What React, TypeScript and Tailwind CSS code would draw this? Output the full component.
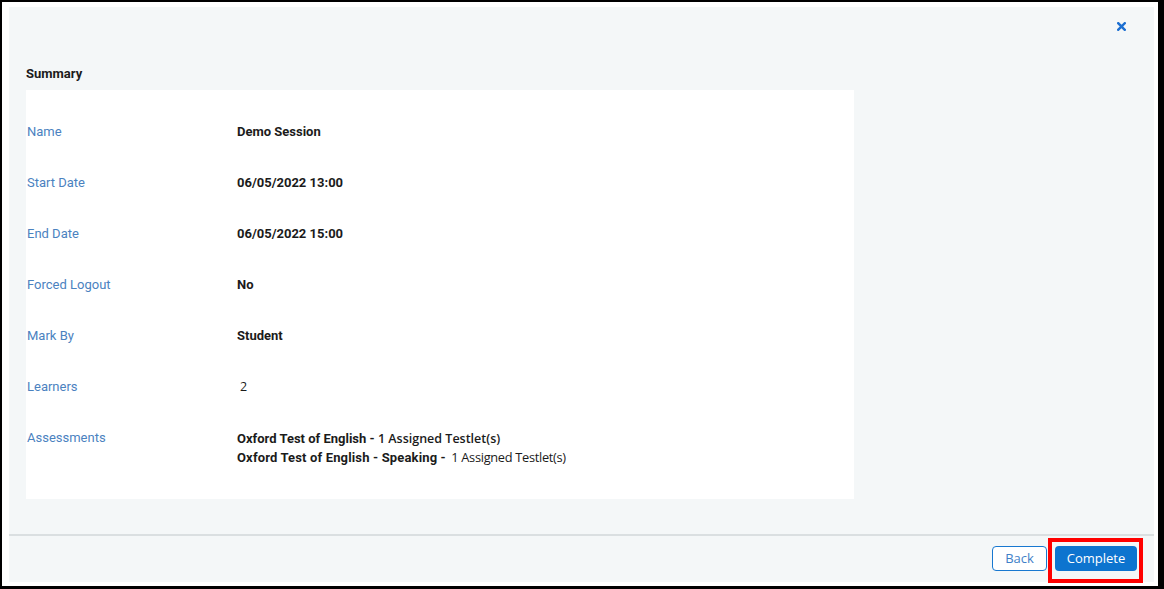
import React from 'react';

const rows: { label: string; value: React.ReactNode }[] = [
  { label: 'Name', value: <span className="font-bold">Demo Session</span> },
  { label: 'Start Date', value: <span className="font-bold">06/05/2022 13:00</span> },
  { label: 'End Date', value: <span className="font-bold">06/05/2022 15:00</span> },
  { label: 'Forced Logout', value: <span className="font-bold">No</span> },
  { label: 'Mark By', value: <span className="font-bold">Student</span> },
  {
    label: 'Learners',
    value: <span className="pl-[3px] font-['Open_Sans',sans-serif] text-[12.5px]">2</span>,
  },
  {
    label: 'Assessments',
    value: (
      <div className="flex flex-col leading-[19px]">
        <span className="font-bold">
          Oxford Test of English -{' '}
          <span className="font-['Open_Sans',sans-serif] font-semibold text-[12.5px]">1 Assigned Testlet(s)</span>
        </span>
        <span>
          <span className="font-bold tracking-[0.15px]">Oxford Test of English - Speaking - </span>
          <span className="ml-[2px] font-['Open_Sans',sans-serif] text-[12.8px] tracking-[-0.3px]">1 Assigned Testlet(s)</span>
        </span>
      </div>
    ),
  },
];

function CloseIcon() {
  return (
    <svg width="9" height="9" viewBox="0 0 9 9" className="text-[#1c6fd1]">
      <path d="M1.2 1.2 L7.8 7.8 M7.8 1.2 L1.2 7.8" stroke="currentColor" strokeWidth="2.4" strokeLinecap="square" />
    </svg>
  );
}

export default function App() {
  return (
    <div className="w-[1164px] h-[589px] bg-black pt-[2px] pl-[2px] pr-[6px] pb-[3px] font-['Roboto',sans-serif]">
      <div className="h-full bg-white pt-[5px] pl-[7px] pr-[4px] pb-[4px]">
        <div className="h-full bg-[#f4f7f8] flex flex-col">
          <div className="flex-1 flex flex-col">
            <div className="flex justify-end pt-[14px] pr-[28px] h-[40px]">
              <div className="pt-[1px]">
                <CloseIcon />
              </div>
            </div>
            <div className="pl-[17px]">
              <h2 className="text-[13px] font-bold text-[#1b1b1b] leading-[17px] pt-[18px]">Summary</h2>
              <div className="mt-[8px] w-[828px] h-[409px] bg-white pt-[33px] pl-[1px]">
                {rows.map((r) => (
                  <div key={r.label} className="flex min-h-[51px] text-[13px] leading-[17px]">
                    <div className="w-[210px] text-[#4b82bf]">{r.label}</div>
                    <div className="text-[#1b1b1b]">{r.value}</div>
                  </div>
                ))}
              </div>
            </div>
          </div>
          <div className="h-[2px] bg-[#dadfe1]" />
          <div className="h-[46px] flex justify-end items-start pt-[10px] pr-[17px] gap-[8px]">
            <button className="h-[25px] w-[55px] rounded-[4px] border border-[#1878d0] bg-white text-[#3f7fc8] text-[13px] font-['Open_Sans',sans-serif]">
              Back
            </button>
            <div className="relative">
              <button className="h-[25px] w-[82px] rounded-[4px] bg-[#0d74cf] text-white text-[13px] font-['Open_Sans',sans-serif]">
                Complete
              </button>
              <div className="absolute -left-[7px] -right-[6px] -top-[8px] -bottom-[12px] border-[4px] border-[#ff0000] pointer-events-none" />
            </div>
          </div>
        </div>
      </div>
    </div>
  );
}
